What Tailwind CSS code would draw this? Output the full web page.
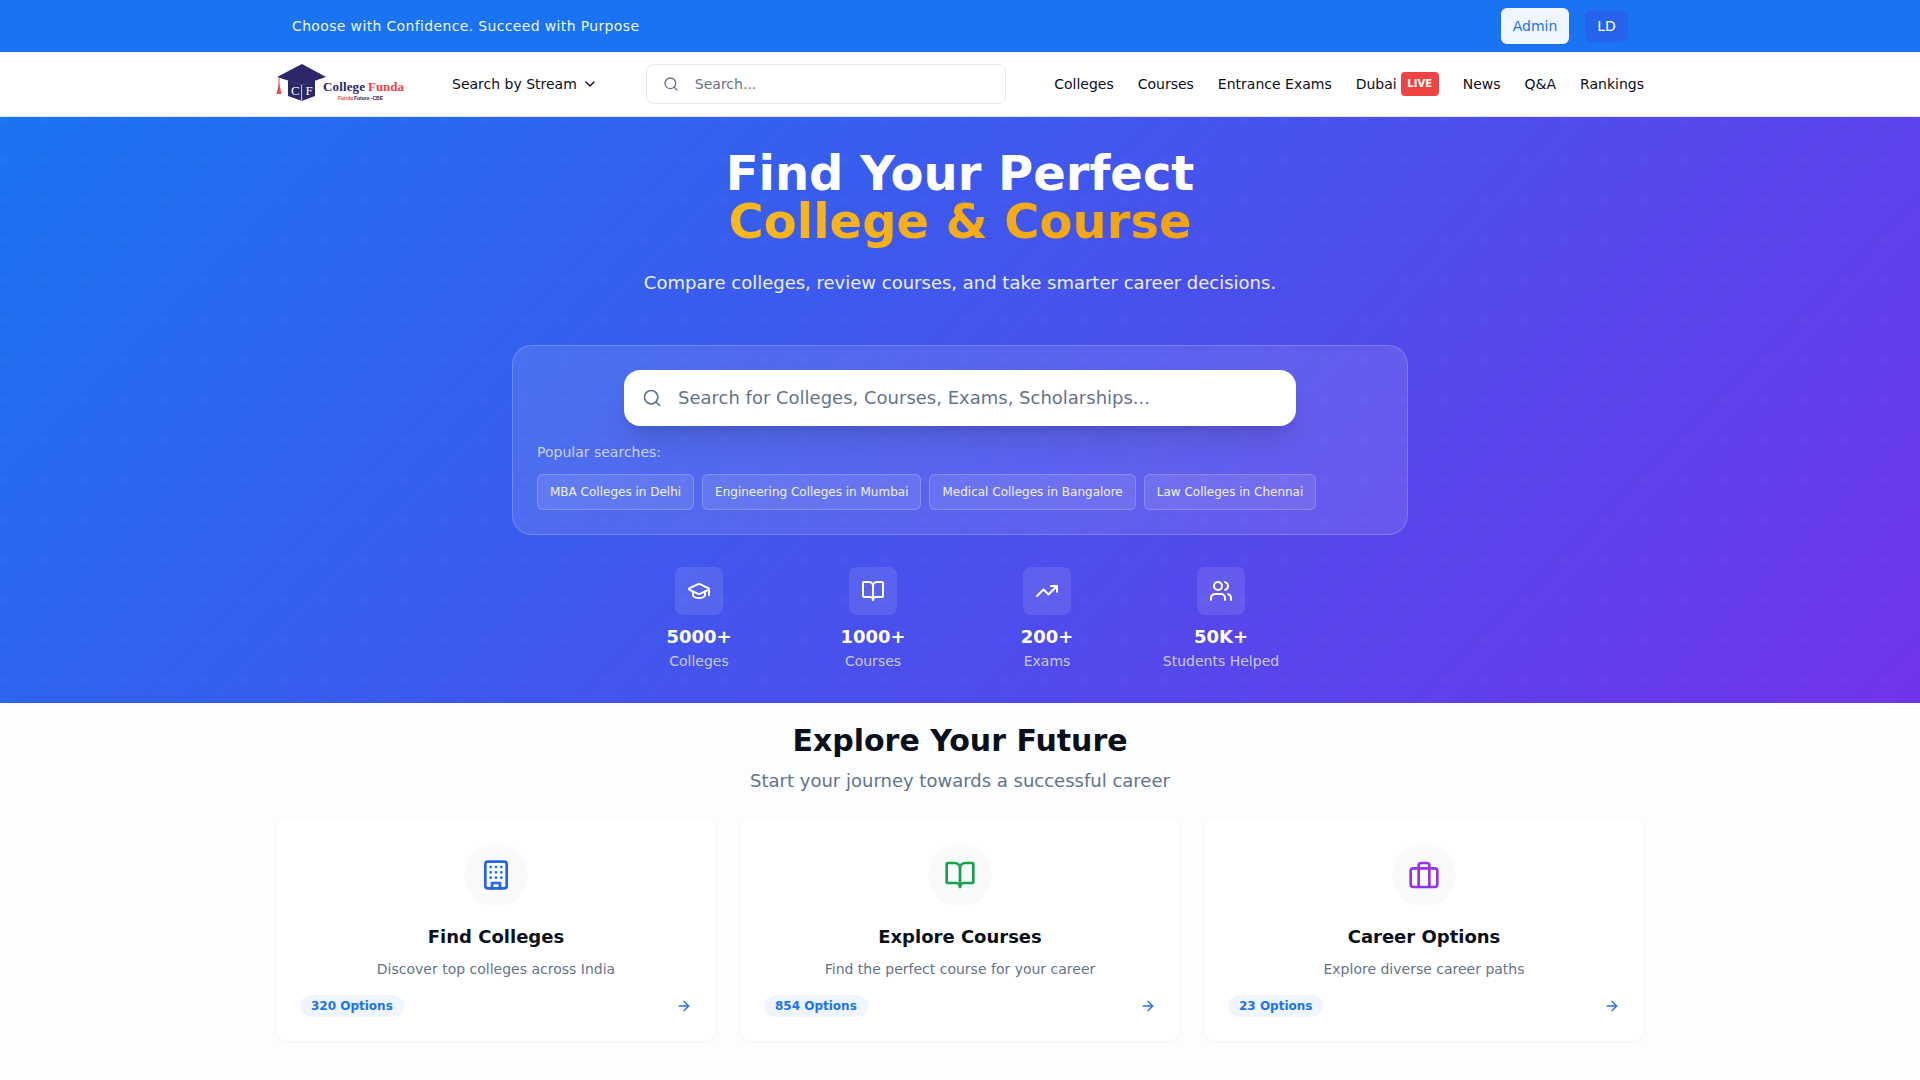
<!DOCTYPE html>
<html lang="en">
<head>
<meta charset="utf-8">
<title>College Funda</title>
<script src="https://cdn.jsdelivr.net/npm/@tailwindcss/browser@4"></script>
</head>
<body class="font-['DejaVu_Sans',sans-serif] bg-[#fbfdff] text-[#0a0f1c]">
<div class="bg-[#1a73f0] h-[52px]">
  <div class="w-[1368px] mx-auto h-full flex items-center justify-between pl-4 pr-4">
    <p class="text-sm tracking-wide text-white/95">Choose with Confidence. Succeed with Purpose</p>
    <div class="flex items-center gap-4">
      <button class="h-9 w-[68px] rounded-md bg-[#f0f6ff] text-sm text-[#1a73f0]">Admin</button>
      <button class="h-8 w-[43px] rounded-md bg-[#2563eb] text-sm text-white">LD</button>
    </div>
  </div>
</div>
<header class="bg-white h-[65px] border-b border-[#e2e8f0]">
  <div class="w-[1368px] mx-auto h-full flex items-center">
    <svg class="w-[130px] h-[42px] shrink-0" viewBox="0 0 130 42" aria-label="College Funda logo">
      <path d="M1 14 L26 1 L50 14 L26 22Z" fill="#2b2768"/>
      <path d="M12 17 L26 22 L39 17 V33 L26 38 L12 33Z" fill="#2b2768"/>
      <path d="M25.6 22v16" stroke="#fff" stroke-width=".8"/>
      <path d="M3 15v8" stroke="#ef4444" stroke-width="1"/>
      <path d="M3 20 L5.5 31 H0.5Z" fill="#ef4444"/>
      <text x="15" y="32" font-family="Liberation Serif" font-size="13" fill="#fff">C</text>
      <text x="29.5" y="32" font-family="Liberation Serif" font-size="13" fill="#fff">F</text>
      <text x="47" y="27.5" font-family="Liberation Serif" font-size="13" font-weight="700" fill="#2b2768" textLength="42">College</text>
      <text x="92" y="27.5" font-family="Liberation Serif" font-size="13" font-weight="700" fill="#ef4444" textLength="36">Funda</text>
      <text x="62" y="36.5" font-family="Liberation Sans" font-size="5" font-weight="700" fill="#ef4444">Funda</text>
      <text x="78" y="36.5" font-family="Liberation Sans" font-size="5" font-weight="700" fill="#2b2768" textLength="29">Future -CBE</text>
    </svg>
    <button class="ml-[46px] flex items-center gap-[5px] text-sm text-[#0a0f1c]">Search by Stream
      <svg class="w-4 h-4" viewBox="0 0 24 24" fill="none" stroke="currentColor" stroke-width="2" stroke-linecap="round" stroke-linejoin="round"><path d="m6 9 6 6 6-6"/></svg>
    </button>
    <div class="ml-12 w-[360px] h-10 border border-[#e2e8f0] rounded-lg flex items-center pl-4 gap-4 text-sm text-[#64748b]">
      <svg class="w-4 h-4" viewBox="0 0 24 24" fill="none" stroke="currentColor" stroke-width="2" stroke-linecap="round" stroke-linejoin="round"><circle cx="11" cy="11" r="8"/><path d="m21 21-4.3-4.3"/></svg>
      <span>Search...</span>
    </div>
    <nav class="ml-auto flex items-center gap-6 text-sm text-[#0a0f1c]">
      <a>Colleges</a><a>Courses</a><a>Entrance Exams</a>
      <a class="flex items-center gap-1">Dubai <span class="bg-[#ef4444] text-white text-[10px] font-bold rounded w-[38px] justify-center h-6 flex items-center">LIVE</span></a>
      <a>News</a><a>Q&amp;A</a><a>Rankings</a>
    </nav>
  </div>
</header>
<section class="h-[586px] pt-8 text-center text-white bg-[radial-gradient(circle_at_3px_3px,rgba(255,255,255,0.02)_3px,transparent_3px),linear-gradient(135deg,#1a73f0,#7034e9)] bg-size-[40px_40px,100%_100%]">
  <h1 class="text-5xl font-bold leading-[48px]">Find Your Perfect<br><span class="text-transparent bg-clip-text bg-linear-to-r from-[#f9b81c] to-[#f2a20c]">College &amp; Course</span></h1>
  <p class="mt-6 text-lg leading-7 text-white/90">Compare colleges, review courses, and take smarter career decisions.</p>
  <div class="mt-12 mx-auto w-[896px] h-[190px] rounded-[20px] border border-white/20 bg-white/10 pt-6 px-6 text-left">
    <div class="mx-auto w-[672px] h-14 bg-white rounded-2xl shadow-xl flex items-center pl-[18px] gap-4 text-lg text-[#64748b]">
      <svg class="w-5 h-5" viewBox="0 0 24 24" fill="none" stroke="currentColor" stroke-width="2" stroke-linecap="round" stroke-linejoin="round"><circle cx="11" cy="11" r="8"/><path d="m21 21-4.3-4.3"/></svg>
      <span>Search for Colleges, Courses, Exams, Scholarships...</span>
    </div>
    <p class="mt-4 text-sm leading-5 text-white/70">Popular searches:</p>
    <div class="mt-3 flex gap-2 text-xs text-white/90">
      <span class="h-9 px-3 flex items-center rounded-md border border-white/20 bg-white/10">MBA Colleges in Delhi</span>
      <span class="h-9 px-3 flex items-center rounded-md border border-white/20 bg-white/10">Engineering Colleges in Mumbai</span>
      <span class="h-9 px-3 flex items-center rounded-md border border-white/20 bg-white/10">Medical Colleges in Bangalore</span>
      <span class="h-9 px-3 flex items-center rounded-md border border-white/20 bg-white/10">Law Colleges in Chennai</span>
    </div>
  </div>
  <div class="mt-8 mx-auto w-[696px] grid grid-cols-4">
    <div class="flex flex-col items-center">
      <div class="w-12 h-12 rounded-lg bg-white/10 flex items-center justify-center"><svg class="w-6 h-6" viewBox="0 0 24 24" fill="none" stroke="currentColor" stroke-width="2" stroke-linecap="round" stroke-linejoin="round"><path d="M21.42 10.922a1 1 0 0 0-.019-1.838L12.83 5.18a2 2 0 0 0-1.66 0L2.6 9.08a1 1 0 0 0 0 1.832l8.57 3.908a2 2 0 0 0 1.66 0z"/><path d="M22 10v6"/><path d="M6 12.5V16a6 3 0 0 0 12 0v-3.5"/></svg></div>
      <div class="mt-2 text-lg leading-7 font-bold">5000+</div>
      <div class="text-sm leading-5 text-white/70">Colleges</div>
    </div>
    <div class="flex flex-col items-center">
      <div class="w-12 h-12 rounded-lg bg-white/10 flex items-center justify-center"><svg class="w-6 h-6" viewBox="0 0 24 24" fill="none" stroke="currentColor" stroke-width="2" stroke-linecap="round" stroke-linejoin="round"><path d="M12 7v14"/><path d="M3 18a1 1 0 0 1-1-1V4a1 1 0 0 1 1-1h5a4 4 0 0 1 4 4 4 4 0 0 1 4-4h5a1 1 0 0 1 1 1v13a1 1 0 0 1-1 1h-6a3 3 0 0 0-3 3 3 3 0 0 0-3-3z"/></svg></div>
      <div class="mt-2 text-lg leading-7 font-bold">1000+</div>
      <div class="text-sm leading-5 text-white/70">Courses</div>
    </div>
    <div class="flex flex-col items-center">
      <div class="w-12 h-12 rounded-lg bg-white/10 flex items-center justify-center"><svg class="w-6 h-6" viewBox="0 0 24 24" fill="none" stroke="currentColor" stroke-width="2" stroke-linecap="round" stroke-linejoin="round"><path d="M16 7h6v6"/><path d="m22 7-8.5 8.5-5-5L2 17"/></svg></div>
      <div class="mt-2 text-lg leading-7 font-bold">200+</div>
      <div class="text-sm leading-5 text-white/70">Exams</div>
    </div>
    <div class="flex flex-col items-center">
      <div class="w-12 h-12 rounded-lg bg-white/10 flex items-center justify-center"><svg class="w-6 h-6" viewBox="0 0 24 24" fill="none" stroke="currentColor" stroke-width="2" stroke-linecap="round" stroke-linejoin="round"><path d="M16 21v-2a4 4 0 0 0-4-4H6a4 4 0 0 0-4 4v2"/><path d="M16 3.128a4 4 0 0 1 0 7.744"/><path d="M22 21v-2a4 4 0 0 0-3-3.87"/><circle cx="9" cy="7" r="4"/></svg></div>
      <div class="mt-2 text-lg leading-7 font-bold">50K+</div>
      <div class="text-sm leading-5 text-white/70">Students Helped</div>
    </div>
  </div>
</section>
<section class="h-[377px] overflow-hidden text-center pt-5">
  <h2 class="text-3xl leading-9 font-bold">Explore Your Future</h2>
  <p class="mt-2 text-lg leading-7 text-[#64748b]">Start your journey towards a successful career</p>
  <div class="mt-6 mx-auto w-[1368px] grid grid-cols-3 gap-6">
    <article class="h-[222px] bg-white rounded-xl shadow-[0_1px_3px_rgba(0,0,0,0.05)] px-6 pt-6 flex flex-col items-center">
      <div class="w-16 h-16 rounded-full bg-[#f8fafc] flex items-center justify-center text-[#2563eb]"><svg class="w-8 h-8" viewBox="0 0 24 24" fill="none" stroke="currentColor" stroke-width="2" stroke-linecap="round" stroke-linejoin="round"><rect width="16" height="20" x="4" y="2" rx="2"/><path d="M9 22v-4h6v4"/><path d="M8 6h.01M16 6h.01M12 6h.01M12 10h.01M12 14h.01M16 10h.01M16 14h.01M8 10h.01M8 14h.01"/></svg></div>
      <h3 class="mt-4 text-lg leading-7 font-bold">Find Colleges</h3>
      <p class="mt-2 text-sm leading-5 text-[#64748b]">Discover top colleges across India</p>
      <div class="mt-4 w-full flex items-center justify-between">
        <span class="h-[22px] px-[11px] rounded-full bg-[#f0f6ff] text-xs font-bold text-[#1a73f0] flex items-center">320 Options</span>
        <svg class="w-4 h-4 text-[#1a73f0]" viewBox="0 0 24 24" fill="none" stroke="currentColor" stroke-width="2" stroke-linecap="round" stroke-linejoin="round"><path d="M5 12h14"/><path d="m12 5 7 7-7 7"/></svg>
      </div>
    </article>
    <article class="h-[222px] bg-white rounded-xl shadow-[0_1px_3px_rgba(0,0,0,0.05)] px-6 pt-6 flex flex-col items-center">
      <div class="w-16 h-16 rounded-full bg-[#f8fafc] flex items-center justify-center text-[#16a34a]"><svg class="w-8 h-8" viewBox="0 0 24 24" fill="none" stroke="currentColor" stroke-width="2" stroke-linecap="round" stroke-linejoin="round"><path d="M12 7v14"/><path d="M3 18a1 1 0 0 1-1-1V4a1 1 0 0 1 1-1h5a4 4 0 0 1 4 4 4 4 0 0 1 4-4h5a1 1 0 0 1 1 1v13a1 1 0 0 1-1 1h-6a3 3 0 0 0-3 3 3 3 0 0 0-3-3z"/></svg></div>
      <h3 class="mt-4 text-lg leading-7 font-bold">Explore Courses</h3>
      <p class="mt-2 text-sm leading-5 text-[#64748b]">Find the perfect course for your career</p>
      <div class="mt-4 w-full flex items-center justify-between">
        <span class="h-[22px] px-[11px] rounded-full bg-[#f0f6ff] text-xs font-bold text-[#1a73f0] flex items-center">854 Options</span>
        <svg class="w-4 h-4 text-[#1a73f0]" viewBox="0 0 24 24" fill="none" stroke="currentColor" stroke-width="2" stroke-linecap="round" stroke-linejoin="round"><path d="M5 12h14"/><path d="m12 5 7 7-7 7"/></svg>
      </div>
    </article>
    <article class="h-[222px] bg-white rounded-xl shadow-[0_1px_3px_rgba(0,0,0,0.05)] px-6 pt-6 flex flex-col items-center">
      <div class="w-16 h-16 rounded-full bg-[#f8fafc] flex items-center justify-center text-[#9333ea]"><svg class="w-8 h-8" viewBox="0 0 24 24" fill="none" stroke="currentColor" stroke-width="2" stroke-linecap="round" stroke-linejoin="round"><rect width="20" height="14" x="2" y="7" rx="2"/><path d="M16 21V5a2 2 0 0 0-2-2h-4a2 2 0 0 0-2 2v16"/></svg></div>
      <h3 class="mt-4 text-lg leading-7 font-bold">Career Options</h3>
      <p class="mt-2 text-sm leading-5 text-[#64748b]">Explore diverse career paths</p>
      <div class="mt-4 w-full flex items-center justify-between">
        <span class="h-[22px] px-[11px] rounded-full bg-[#f0f6ff] text-xs font-bold text-[#1a73f0] flex items-center">23 Options</span>
        <svg class="w-4 h-4 text-[#1a73f0]" viewBox="0 0 24 24" fill="none" stroke="currentColor" stroke-width="2" stroke-linecap="round" stroke-linejoin="round"><path d="M5 12h14"/><path d="m12 5 7 7-7 7"/></svg>
      </div>
    </article>
  </div>
</section>
</body>
</html>
